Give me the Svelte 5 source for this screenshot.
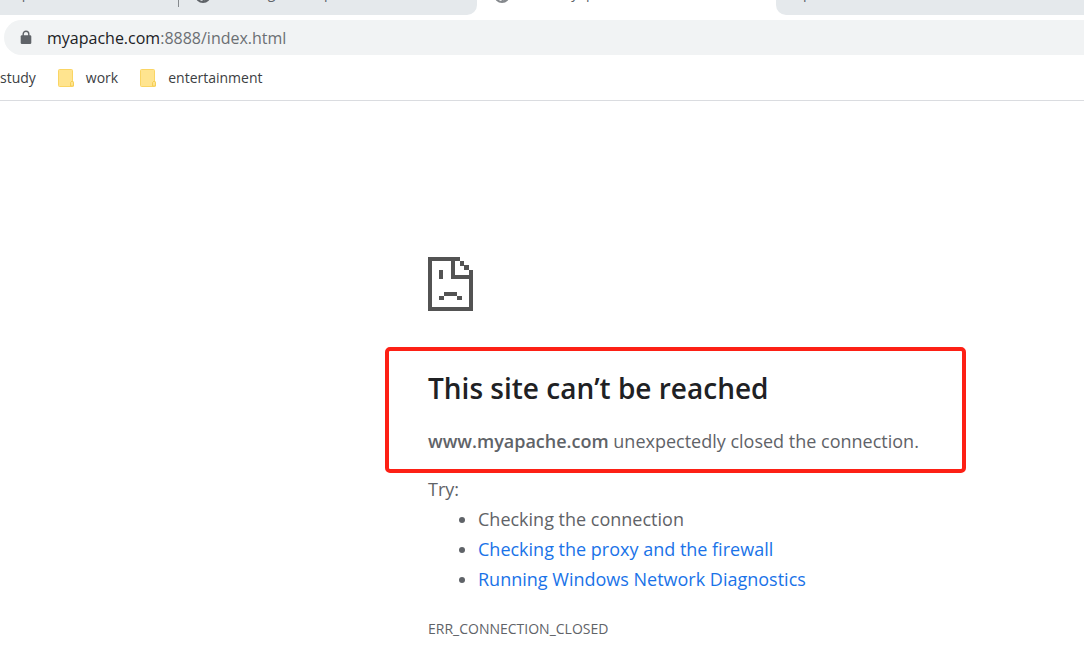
<script>
  const tabs = [
    { title: 'Help', kind: 'first' },
    { title: 'Nothing to compare', kind: 'second', globe: true },
    { title: 'www.myapache.com', kind: 'active', globe: true },
    { title: 'p', kind: 'last' },
  ];
  const bookmarks = ['work', 'entertainment'];
</script>

<header>
  <nav class="tabs" aria-label="Tabs">
    {#each tabs as tab}
      <button class="tab {tab.kind}">
        {#if tab.globe}
          <svg width="16" height="20" viewBox="0 0 16 20" aria-hidden="true">
            <circle cx="8" cy="12" r="7" fill="none" stroke="currentColor" stroke-width="2" />
            <path d="M3 14l4 1 2 3M10 18l3-4" fill="none" stroke="currentColor" stroke-width="2" />
          </svg>
        {/if}
        <span>{tab.title}</span>
      </button>
    {/each}
  </nav>

  <div class="address">
    <svg width="12" height="15" viewBox="0 0 12 15" aria-hidden="true">
      <path d="M3.2 6V4a2.8 2.8 0 0 1 5.6 0v2" fill="none" stroke="#5f6368" stroke-width="1.4" />
      <rect x="0.7" y="5.3" width="10.6" height="8.7" rx="1.2" fill="#5f6368" />
    </svg>
    <a href="#page"><span class="host">myapache.com</span>:8888/index.html</a>
  </div>

  <nav class="bookmarks" aria-label="Bookmarks">
    <button>study</button>
    {#each bookmarks as name}
      <button>
        <svg width="16" height="18" viewBox="0 0 16 18" aria-hidden="true">
          <path d="M1.5 0.5h12a1 1 0 0 1 1 1V12l1 1v3.5a1 1 0 0 1-1 1h-13a1 1 0 0 1-1-1v-15a1 1 0 0 1 1-1z" fill="#ffe48f" stroke="#fad564" />
          <path d="M12.5 17v-3.500l1.500-1.500 1.500 1.500V17z" fill="#ffe48f" stroke="#f5cf57" />
        </svg>
        <span>{name}</span>
      </button>
    {/each}
  </nav>
</header>

<main id="page">
  <svg class="sad" width="46" height="54" viewBox="0 0 46 54" fill="#535353" shape-rendering="crispEdges" aria-hidden="true">
    <path d="M0 0h32v4h-5v14h14v-5h4v41H0zM4 4v46h37V22H23V4z" fill-rule="evenodd" />
    <path d="M32 4h4v5h-4zM36 8h5v5h-5zM11 13h4v9h-4zM16 35h13v4H16zM11 39h5v4h-5zM29 39h5v4h-5z" />
  </svg>

  <section class="notice">
    <h1>This site can’t be reached</h1>
    <p><strong>www.myapache.com</strong> unexpectedly closed the connection.</p>
  </section>

  <section class="help">
    <p>Try:</p>
    <ul>
      <li>Checking the connection</li>
      <li><a href="#proxy">Checking the proxy and the firewall</a></li>
      <li><a href="#diagnostics">Running Windows Network Diagnostics</a></li>
    </ul>
    <p class="code">ERR_CONNECTION_CLOSED</p>
  </section>
</main>

<style>
  :global(body) {
    margin: 0;
    background: #fff;
    font-family: "Open Sans", "Noto Sans", sans-serif;
    color: #5f6368;
    overflow: hidden;
  }
  button {
    border: 0;
    padding: 0;
    background: none;
    font: inherit;
    color: inherit;
  }
  a {
    color: #1a73e8;
    text-decoration: none;
  }
  .tabs {
    display: grid;
    grid-template-columns: 179px 298px 299px 1fr;
    height: 15px;
    overflow: hidden;
    font-size: 14px;
    line-height: 20px;
  }
  .tab {
    display: flex;
    align-items: center;
    gap: 12px;
    box-sizing: content-box;
    height: 15px;
    margin-top: -15px;
    padding-bottom: 15px;
    background: #e5e9ec;
    overflow: hidden;
    white-space: nowrap;
  }
  .tab svg {
    flex: none;
    color: #5f6368;
  }
  .first {
    background: linear-gradient(#85898d, #85898d) right top / 1px 22px no-repeat #e5e9ec;
  }
  .second {
    padding-left: 16px;
    border-radius: 0 0 10px 0;
  }
  .active {
    padding-left: 17px;
    background: #fff;
  }
  .tab.active svg {
    color: #85898d;
  }
  .last {
    padding-left: 27px;
    border-radius: 0 0 0 10px;
  }
  .address {
    display: flex;
    align-items: center;
    gap: 15px;
    height: 35px;
    margin: 5px 0 0 4px;
    padding-left: 16px;
    border-radius: 18px 0 0 18px;
    background: #f1f3f4;
    font-size: 16px;
  }
  .address a {
    color: #6b6f73;
  }
  .address .host {
    color: #202124;
  }
  .bookmarks {
    display: flex;
    align-items: center;
    gap: 22px;
    height: 45px;
    border-bottom: 1px solid #dadce0;
    font-size: 14px;
    color: #3c4043;
  }
  .bookmarks button {
    display: flex;
    align-items: center;
    gap: 12px;
  }
  main {
    padding: 156px 118px 0 385px;
  }
  .sad {
    display: block;
    margin-left: 43px;
  }
  .notice {
    margin-top: 36px;
    padding: 16px 39px 14px;
    border: 4px solid #fd2015;
    border-radius: 5px;
    white-space: nowrap;
  }
  h1 {
    margin: 0;
    font-size: 28px;
    line-height: 42px;
    font-weight: 600;
    color: #202124;
  }
  p {
    margin: 0;
  }
  strong {
    font-weight: 600;
  }
  .notice p {
    margin-top: 18px;
    font-size: 18px;
    line-height: 28px;
  }
  .help {
    padding: 1px 0 0 43px;
    font-size: 18px;
    line-height: 30px;
  }
  ul {
    margin: 0;
    padding-left: 50px;
  }
  .help .code {
    margin-top: 20px;
    font-size: 14px;
  }
</style>
